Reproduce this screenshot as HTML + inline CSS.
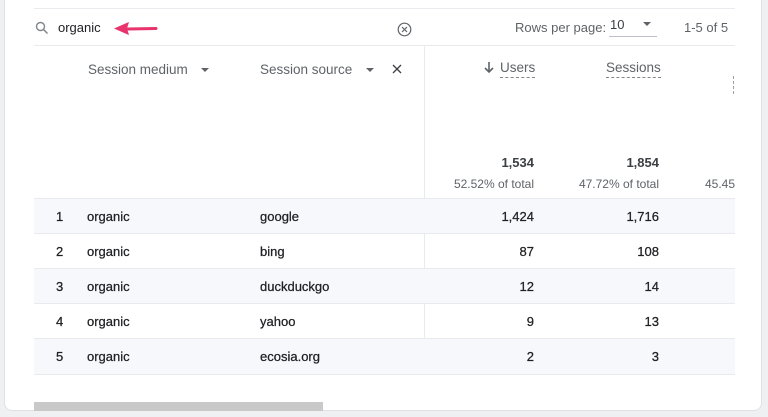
<!DOCTYPE html>
<html><head><style>
*{margin:0;padding:0;box-sizing:border-box}
body{width:768px;height:417px;background:#eef0f2;font-family:"Liberation Sans",Arial,sans-serif;position:relative;overflow:hidden;color:#202124}
.card{position:absolute;left:4px;top:-10px;width:758px;height:421px;background:#fff;border:1px solid #dfe1e5;border-radius:8px}
.a{position:absolute}
.hl{position:absolute;left:34px;width:701px;height:1px;background:#e8eaed}
.row{position:absolute;left:34px;width:701px;height:35px;font-size:13px}
.row span{position:absolute;top:10px;color:#202124;-webkit-text-stroke:0.25px #202124}
.shade{background:#f6f8fb}
.g{color:#5f6368}
</style></head><body>
<div class="card"></div>
<div class="hl" style="top:8px"></div>
<div class="hl" style="top:45px"></div>
<svg class="a" style="left:35px;top:21px" width="14" height="14" viewBox="0 0 14 14"><circle cx="5.5" cy="5.5" r="4" fill="none" stroke="#80868b" stroke-width="1.4"/><path d="M8.5 8.5L12.5 12.5" stroke="#80868b" stroke-width="1.5"/></svg>
<div class="a" style="left:58px;top:20px;font-size:13px;color:#202124">organic</div>
<svg class="a" style="left:112px;top:20px" width="46" height="16" viewBox="0 0 46 16"><path d="M44 8.5 L16 9" stroke="#e8336d" stroke-width="3" stroke-linecap="round"/><path d="M2 8.5 L17 2 L15 8.5 L17 15 Z" fill="#e8336d"/></svg>
<svg class="a" style="left:397px;top:22px" width="15" height="15" viewBox="0 0 15 15"><circle cx="7.5" cy="7.5" r="6.3" fill="none" stroke="#5f6368" stroke-width="1.2"/><path d="M5 5L10 10M10 5L5 10" stroke="#5f6368" stroke-width="1.2"/></svg>
<div class="a g" style="left:515px;top:20px;font-size:13px">Rows per page:</div>
<div class="a" style="left:610px;top:17px;font-size:13px;color:#3c4043">10</div>
<div class="a" style="left:609px;top:36px;width:48px;height:1px;background:#bdc1c6"></div>
<div class="a" style="left:643px;top:22px;width:0;height:0;border-left:4px solid transparent;border-right:4px solid transparent;border-top:4px solid #5f6368"></div>
<div class="a g" style="left:684px;top:20px;font-size:13px">1-5 of 5</div>
<div class="a" style="left:424px;top:45px;width:1px;height:329px;background:#e8eaed"></div>
<div class="a g" style="left:88px;top:62px;font-size:13.5px">Session medium</div>
<div class="a" style="left:201px;top:68px;border-left:4px solid transparent;border-right:4px solid transparent;border-top:4px solid #5f6368"></div>
<div class="a g" style="left:260px;top:62px;font-size:13.5px">Session source</div>
<div class="a" style="left:366px;top:68px;border-left:4px solid transparent;border-right:4px solid transparent;border-top:4px solid #5f6368"></div>
<svg class="a" style="left:392px;top:64px" width="10" height="10" viewBox="0 0 10 10"><path d="M1 1L9 9M9 1L1 9" stroke="#3c4043" stroke-width="1.3"/></svg>
<svg class="a" style="left:484px;top:61px" width="10" height="13" viewBox="0 0 10 13"><path d="M5 1V11M1 7L5 11L9 7" stroke="#5f6368" stroke-width="1.6" fill="none"/></svg>
<div class="a g" style="left:500px;top:60px;font-size:13.5px;border-bottom:1px dashed #80868b;padding-bottom:2px">Users</div>
<div class="a g" style="left:606px;top:60px;font-size:13.5px;border-bottom:1px dashed #80868b;padding-bottom:2px">Sessions</div>
<div class="a" style="left:733px;top:76px;width:2px;height:18px;border-left:1px dashed #9aa0a6"></div>
<div class="a" style="right:234px;top:155px;font-size:13px;font-weight:bold;color:#3c4043">1,534</div>
<div class="a" style="right:109px;top:155px;font-size:13px;font-weight:bold;color:#3c4043">1,854</div>
<div class="a g" style="right:234px;top:177px;font-size:12px">52.52% of total</div>
<div class="a g" style="right:109px;top:177px;font-size:12px">47.72% of total</div>
<div class="a g" style="left:705px;top:177px;font-size:12px">45.45</div>
<div class="hl" style="top:198px"></div>
<div class="row shade" style="top:199px"><span style="left:22px">1</span><span style="left:53px">organic</span><span style="left:226px">google</span><span style="right:201px">1,424</span><span style="right:76px">1,716</span></div>
<div class="hl" style="top:233px"></div>
<div class="row" style="top:234px"><span style="left:22px">2</span><span style="left:53px">organic</span><span style="left:226px">bing</span><span style="right:201px">87</span><span style="right:76px">108</span></div>
<div class="hl" style="top:268px"></div>
<div class="row shade" style="top:269px"><span style="left:22px">3</span><span style="left:53px">organic</span><span style="left:226px">duckduckgo</span><span style="right:201px">12</span><span style="right:76px">14</span></div>
<div class="hl" style="top:303px"></div>
<div class="row" style="top:304px"><span style="left:22px">4</span><span style="left:53px">organic</span><span style="left:226px">yahoo</span><span style="right:201px">9</span><span style="right:76px">13</span></div>
<div class="hl" style="top:338px"></div>
<div class="row shade" style="top:339px"><span style="left:22px">5</span><span style="left:53px">organic</span><span style="left:226px">ecosia.org</span><span style="right:201px">2</span><span style="right:76px">3</span></div>
<div class="hl" style="top:374px"></div>
<div class="a" style="left:34px;top:402px;width:289px;height:9px;background:#c9c9c9"></div>
</body></html>
